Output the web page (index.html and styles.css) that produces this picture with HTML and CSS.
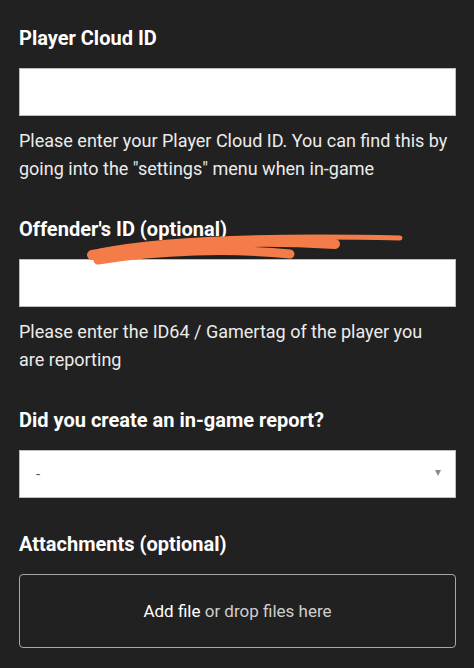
FILE: index.html
```html
<!DOCTYPE html>
<html lang="en">
<head>
    <meta charset="UTF-8">
    <meta name="viewport" content="width=device-width, initial-scale=1.0">
    <title>Report a Player</title>
    <link rel="stylesheet" href="styles.css">
</head>
<body>

  <form class="report-form">
    <div class="field">
        <label class="field-label" for="cloudId">Player Cloud ID</label>
        <input class="text-input" type="text" id="cloudId" name="cloudId">
        <p class="field-help">Please enter your Player Cloud ID. You can find this by going into the "settings" menu when in-game</p>
    </div>

    <div class="field field-marked">
        <label class="field-label" for="offenderId">Offender's ID (optional)</label>
        <!-- orange scribble drawn over the screenshot -->
        <svg class="scribble" width="330" height="45" viewBox="0 0 330 45">
            <path d="M20 25 C80 13, 180 9, 320 12" fill="none" stroke="#f47c48" stroke-width="5" stroke-linecap="round"/>
            <path d="M12 29 C80 17, 170 13, 255 18" fill="none" stroke="#f47c48" stroke-width="10" stroke-linecap="round"/>
            <path d="M18 34 C80 24, 150 22, 210 28" fill="none" stroke="#f47c48" stroke-width="9" stroke-linecap="round"/>
        </svg>
        <input class="text-input" type="text" id="offenderId" name="offenderId">
        <p class="field-help">Please enter the ID64 / Gamertag of the player you are reporting</p>
    </div>

    <div class="field">
        <label class="field-label" for="ingameReport">Did you create an in-game report?</label>
        <div class="select-box">
            <select id="ingameReport" name="ingameReport">
                <option>-</option>
                <option>Yes</option>
                <option>No</option>
            </select>
            <span class="select-arrow"></span>
        </div>
    </div>

    <div class="field">
        <label class="field-label">Attachments (optional)</label>
        <div class="dropzone">
            <span class="dropzone-add">Add file</span>&nbsp;or drop files here
        </div>
    </div>
  </form>

</body>
</html>
```

FILE: styles.css
```css
body {
    font-family: Roboto, "Noto Sans", Arial, sans-serif;
    background-color: #212121;
    color: #fff;
    margin: 0;
    padding: 25px 18px 20px 19px;
}
.report-form {
    display: flex;
    flex-direction: column;
    gap: 33px;
}
.field {
    display: flex;
    flex-direction: column;
}
.field-marked {
    position: relative;
}
.field-label {
    font-size: 20px;
    font-weight: bold;
    line-height: 26px;
    margin-bottom: 17px;
}
.text-input {
    height: 48px;
    box-sizing: border-box;
    border: 1px solid #bdbdbd;
    background: #fff;
    margin: 0;
    padding: 0 16px;
    font-size: 17px;
}
.field-help {
    margin: 11px 0 0;
    max-width: 432px;
    font-size: 18px;
    line-height: 28px;
    color: #ececec;
}
.scribble {
    position: absolute;
    left: 61px;
    top: 10px;
}
.select-box {
    position: relative;
    height: 48px;
}
.select-box select {
    width: 100%;
    height: 48px;
    box-sizing: border-box;
    border: 1px solid #bdbdbd;
    border-radius: 0;
    background: #fff;
    appearance: none;
    padding: 0 16px;
    font-family: Roboto, Arial, sans-serif;
    font-size: 15px;
    color: #555;
}
.select-arrow {
    position: absolute;
    right: 15px;
    top: 20px;
    border-left: 3.5px solid transparent;
    border-right: 3.5px solid transparent;
    border-top: 6px solid #8a8a8a;
}
.dropzone {
    height: 74px;
    box-sizing: border-box;
    border: 1px solid #a8a8a8;
    border-radius: 4px;
    display: flex;
    align-items: center;
    justify-content: center;
    font-size: 17px;
    color: #cfcfcf;
}
.dropzone-add {
    color: #fff;
}
```
